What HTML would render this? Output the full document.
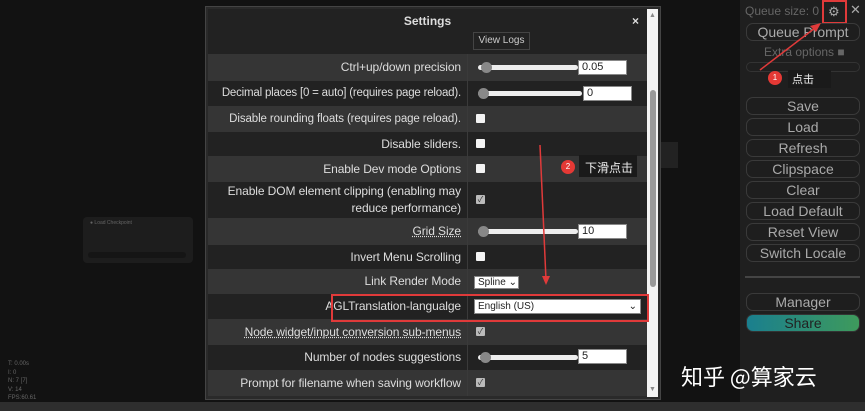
<!DOCTYPE html>
<html><head><meta charset="utf-8"><style>
*{margin:0;padding:0;box-sizing:border-box}
body{width:865px;height:411px;background:#121212;position:relative;overflow:hidden;font-family:"Liberation Sans","Noto Sans CJK SC",sans-serif}
.abs{position:absolute}
.dlg{left:205px;top:6px;width:456px;height:394px;background:#2a2a2a;border:1px solid #444}
.row{position:absolute;left:208px;width:439px}
.row .l{position:absolute;left:0;width:260px;top:0;bottom:0;text-align:right;padding-right:6px;color:#ddd;font-size:12px;display:flex;align-items:center;justify-content:flex-end;line-height:17px;border-right:1px solid #3a3a3a;letter-spacing:-0.1px}
.A{background:#353535}.B{background:#222}
.cb{position:absolute;left:268px;width:9px;height:9px;background:#f4f4f4;border-radius:1px}
.ck{background:#bbb;color:#333;font-size:8px;line-height:9px;text-align:center}
.sl{position:absolute;left:270px;width:100px;height:5px;background:#eee;border-radius:3px}
.sl i{position:absolute;left:0;top:-3px;width:11px;height:11px;border-radius:50%;background:#888}
.inp{position:absolute;height:15px;background:#fff;border:1px solid #888;color:#222;font-size:11px;padding-left:3px;line-height:13px}
.btn{position:absolute;left:746px;width:114px;height:18px;border:1px solid #3a3a3a;border-radius:7px;background:#1e1e1e;color:#aaa;font-size:14px;text-align:center;line-height:17px}
</style></head><body>
<div class="abs" style="left:83px;top:217px;width:110px;height:46px;background:#1d1d1d;border-radius:4px"></div>
<div class="abs" style="left:90px;top:220px;font-size:5px;color:#666">● Load Checkpoint</div>
<div class="abs" style="left:88px;top:252px;width:98px;height:6px;background:#151515;border-radius:3px"></div>
<div class="abs" style="left:8px;top:360px;font-size:6px;color:#666;line-height:8.5px">T: 0.00s<br>I: 0<br>N: 7 [7]<br>V: 14<br>FPS:60.61</div>
<div class="abs" style="left:660px;top:142px;width:18px;height:26px;background:#222"></div>

<div class="abs dlg"></div>
<div class="row B" style="top:9px;height:24px;background:#222"><div style="text-align:center;color:#ddd;font-weight:bold;font-size:12px;line-height:24px">Settings</div><div class="abs" style="right:8px;top:0;color:#ddd;font-size:12px;line-height:24px;font-weight:bold">×</div></div>
<div class="row B" style="top:33px;height:21px"><div class="l" style="border:0"></div><div class="abs" style="left:265px;top:-1px;width:57px;height:18px;border:1px solid #444;color:#ccc;font-size:10px;text-align:center;line-height:16px">View Logs</div></div>
<div class="row A" style="top:54px;height:27px"><div class="l">Ctrl+up/down precision</div><div class="sl" style="top:11px"><i style="left:3px"></i></div><div class="inp" style="left:370px;top:6px;width:49px">0.05</div></div>
<div class="row B" style="top:81px;height:25px"><div class="l" style="white-space:nowrap;font-size:11.5px;letter-spacing:-0.2px">Decimal places [0 = auto] (requires page reload).</div><div class="sl" style="top:10px;width:104px"><i></i></div><div class="inp" style="left:375px;top:5px;width:49px">0</div></div>
<div class="row A" style="top:106px;height:26px"><div class="l" style="white-space:nowrap;font-size:11.5px;letter-spacing:-0.1px">Disable rounding floats (requires page reload).</div><div class="cb" style="top:8px"></div></div>
<div class="row B" style="top:132px;height:24px"><div class="l">Disable sliders.</div><div class="cb" style="top:7px"></div></div>
<div class="row A" style="top:156px;height:26px"><div class="l">Enable Dev mode Options</div><div class="cb" style="top:8px"></div></div>
<div class="row B" style="top:182px;height:36px"><div class="l">Enable DOM element clipping (enabling may<br>reduce performance)</div><div class="cb ck" style="top:13px">✓</div></div>
<div class="row A" style="top:218px;height:27px"><div class="l"><u style="text-decoration-style:dotted">Grid Size</u></div><div class="sl" style="top:11px"><i></i></div><div class="inp" style="left:370px;top:6px;width:49px">10</div></div>
<div class="row B" style="top:245px;height:24px"><div class="l">Invert Menu Scrolling</div><div class="cb" style="top:7px"></div></div>
<div class="row A" style="top:269px;height:25px"><div class="l">Link Render Mode</div><div class="inp" style="left:266px;top:7px;width:45px;height:13px;font-size:10px;line-height:11px">Spline ⌄</div></div>
<div class="row B" style="top:294px;height:25px"><div class="l">AGLTranslation-langualge</div><div class="inp" style="left:266px;top:5px;width:167px;font-size:10px">English (US)<span style="position:absolute;right:3px">⌄</span></div></div>
<div class="row A" style="top:319px;height:26px"><div class="l"><u style="text-decoration-style:dotted">Node widget/input conversion sub-menus</u></div><div class="cb ck" style="top:8px">✓</div></div>
<div class="row B" style="top:345px;height:25px"><div class="l">Number of nodes suggestions</div><div class="sl" style="top:10px"><i style="left:2px"></i></div><div class="inp" style="left:370px;top:4px;width:49px">5</div></div>
<div class="row A" style="top:370px;height:26px"><div class="l">Prompt for filename when saving workflow</div><div class="cb ck" style="top:8px">✓</div></div>
<div class="abs" style="left:647px;top:9px;width:11px;height:388px;background:#f3f3f3"></div>
<div class="abs" style="left:650px;top:90px;width:6px;height:197px;background:#999;border-radius:3px"></div>
<div class="abs" style="left:649px;top:12px;font-size:7px;color:#888">▲</div>
<div class="abs" style="left:649px;top:386px;font-size:7px;color:#888">▼</div>
<div class="abs" style="left:0;top:402px;width:865px;height:9px;background:#2e2e2e"></div>
<div class="abs" style="left:331px;top:294px;width:318px;height:28px;border:2px solid #e03a3a"></div>

<div class="abs" style="left:740px;top:0;width:125px;height:402px;background:#1f1f1f"></div>
<div class="abs" style="left:745px;top:4px;font-size:12px;color:#666">Queue size: 0</div>
<div class="abs" style="left:828px;top:4px;color:#aaa;font-size:13px">⚙</div>
<div class="abs" style="left:850px;top:2px;color:#aaa;font-size:13px">✕</div>
<div class="abs" style="left:822px;top:0;width:25px;height:24px;border:2px solid #e03a3a"></div>
<div class="btn" style="top:23px">Queue Prompt</div>
<div class="abs" style="left:764px;top:45px;font-size:12px;color:#666">Extra options ■</div>
<div class="abs" style="left:746px;top:62px;width:114px;height:10px;border:1px solid #333;border-radius:5px"></div>
<div class="abs" style="left:788px;top:70px;width:43px;height:18px;background:#1a1a1a"></div>
<div class="abs" style="left:768px;top:71px;width:14px;height:14px;border-radius:50%;background:#e53935;color:#fff;font-size:8px;text-align:center;line-height:14px">1</div>
<div class="abs" style="left:792px;top:71px;font-size:11px;color:#eee">点击</div>
<div class="btn" style="top:97px">Save</div>
<div class="btn" style="top:118px">Load</div>
<div class="btn" style="top:139px">Refresh</div>
<div class="btn" style="top:160px">Clipspace</div>
<div class="btn" style="top:181px">Clear</div>
<div class="btn" style="top:202px">Load Default</div>
<div class="btn" style="top:223px">Reset View</div>
<div class="btn" style="top:244px">Switch Locale</div>
<div class="abs" style="left:745px;top:276px;width:115px;height:2px;background:#444"></div>
<div class="btn" style="top:293px">Manager</div>
<div class="btn" style="top:314px;background:linear-gradient(90deg,#1a7f8e,#3e9a5c);color:#222;border-color:#333">Share</div>
<div class="abs" style="left:579px;top:155px;width:58px;height:22px;background:#1a1a1a"></div>
<div class="abs" style="left:561px;top:160px;width:14px;height:14px;border-radius:50%;background:#e53935;color:#fff;font-size:8px;text-align:center;line-height:14px">2</div>
<div class="abs" style="left:585px;top:159px;font-size:12px;color:#eee">下滑点击</div>
<svg class="abs" style="left:0;top:0" width="865" height="411">
<line x1="540" y1="145" x2="546" y2="280" stroke="#e03a3a" stroke-width="1.5"/>
<polygon points="542,276 550,276 546,285" fill="#e03a3a"/>
<line x1="760" y1="70" x2="815" y2="28" stroke="#e03a3a" stroke-width="1.5"/>
<polygon points="810,26 821,23 816,32" fill="#e03a3a"/>
</svg>
<div class="abs" style="left:681px;top:360px;font-size:22px;color:#fff;font-family:'Noto Sans CJK SC',sans-serif">知乎 @算家云</div>
</body></html>
